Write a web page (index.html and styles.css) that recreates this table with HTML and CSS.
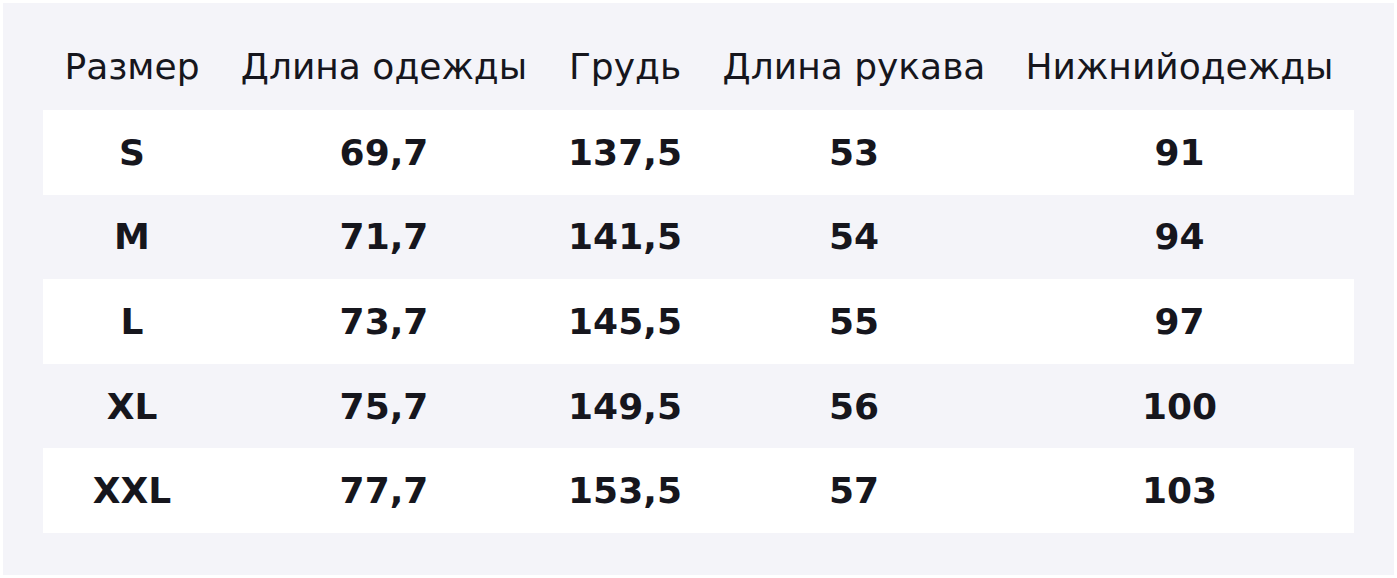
FILE: index.html
```html
<!DOCTYPE html>
<html lang="ru">
<head>
<meta charset="utf-8">
<link rel="stylesheet" href="styles.css">
</head>
<body>
<div class="panel">
  <div class="table">
    <div class="row head">
      <div>Размер</div><div>Длина одежды</div><div>Грудь</div><div>Длина рукава</div><div>Нижнийодежды</div>
    </div>
    <div class="row odd">
      <div>S</div><div>69,7</div><div>137,5</div><div>53</div><div>91</div>
    </div>
    <div class="row">
      <div>M</div><div>71,7</div><div>141,5</div><div>54</div><div>94</div>
    </div>
    <div class="row odd">
      <div>L</div><div>73,7</div><div>145,5</div><div>55</div><div>97</div>
    </div>
    <div class="row">
      <div>XL</div><div>75,7</div><div>149,5</div><div>56</div><div>100</div>
    </div>
    <div class="row odd">
      <div>XXL</div><div>77,7</div><div>153,5</div><div>57</div><div>103</div>
    </div>
  </div>
</div>
</body>
</html>
```
FILE: styles.css
```css
html, body {
  margin: 0;
  padding: 0;
  background: #ffffff;
}
body {
  padding: 3px;
  font-family: "DejaVu Sans", sans-serif;
  color: #16161d;
}
.panel {
  width: 1391px;
  height: 572px;
  box-sizing: border-box;
  background: #f4f4f9;
  padding: 20px 40px 0 40px;
}
.table {
  display: flex;
  flex-direction: column;
}
.row {
  display: grid;
  grid-template-columns: 178px 326px 156px 302px 349px;
  height: 84.6px;
  align-items: center;
  font-size: 36px;
  font-weight: bold;
}
.row > div {
  text-align: center;
  white-space: nowrap;
}
.row.head {
  height: 87px;
  font-weight: normal;
}
.row.odd {
  background: #ffffff;
}
```
